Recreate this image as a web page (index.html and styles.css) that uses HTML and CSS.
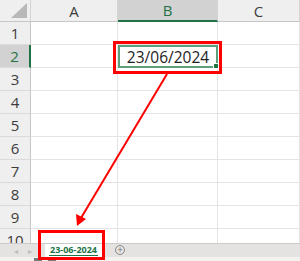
FILE: index.html
```html
<!DOCTYPE html>
<html lang="en">

<head>
    <link rel="stylesheet" href="styles.css">
    <title>Planilha</title>
</head>

<body>
    <div class="janela">
        <div class="grade">
            <div class="canto"><span class="triangulo"></span></div>
            <div class="cabecalho">A</div>
            <div class="cabecalho ativo">B</div>
            <div class="cabecalho">C</div>

            <div class="linha">1</div>
            <div class="celula"></div>
            <div class="celula"></div>
            <div class="celula"></div>

            <div class="linha ativa">2</div>
            <div class="celula"></div>
            <div class="celula selecionada">23/06/2024</div>
            <div class="celula"></div>

            <div class="linha">3</div>
            <div class="celula"></div>
            <div class="celula"></div>
            <div class="celula"></div>

            <div class="linha">4</div>
            <div class="celula"></div>
            <div class="celula"></div>
            <div class="celula"></div>

            <div class="linha">5</div>
            <div class="celula"></div>
            <div class="celula"></div>
            <div class="celula"></div>

            <div class="linha">6</div>
            <div class="celula"></div>
            <div class="celula"></div>
            <div class="celula"></div>

            <div class="linha">7</div>
            <div class="celula"></div>
            <div class="celula"></div>
            <div class="celula"></div>

            <div class="linha">8</div>
            <div class="celula"></div>
            <div class="celula"></div>
            <div class="celula"></div>

            <div class="linha">9</div>
            <div class="celula"></div>
            <div class="celula"></div>
            <div class="celula"></div>

            <div class="linha">10</div>
            <div class="celula"></div>
            <div class="celula"></div>
            <div class="celula"></div>
        </div>

        <div class="abas">
            <span class="nav">&#9666;</span>
            <span class="nav">&#9656;</span>
            <div class="aba"><span>23-06-2024</span></div>
            <span class="mais">+</span>
        </div>
        <div class="status">
            <span class="bloco"></span>
            <span class="bloco"></span>
        </div>

        <!-- marcacoes em vermelho -->
        <div class="destaque destaque-celula"></div>
        <div class="destaque destaque-aba"></div>
        <svg class="seta" width="300" height="261" viewBox="0 0 300 261">
            <line x1="167" y1="74" x2="81" y2="218" stroke="#ff0000" stroke-width="2" />
            <polygon points="77,226 76,214 86,219" fill="#ff0000" />
        </svg>
    </div>
</body>

</html>
```

FILE: styles.css
```css
* {
    box-sizing: border-box;
    margin: 0;
    padding: 0;
}

body {
    width: 300px;
    height: 261px;
    overflow: hidden;
    background: #ffffff;
    font-family: "Open Sans", "Liberation Sans", sans-serif;
}

.janela {
    position: relative;
    width: 300px;
    height: 261px;
    display: flex;
    flex-direction: column;
}

.grade {
    display: grid;
    grid-template-columns: 31px 87px 100px 1fr;
    grid-template-rows: 22px repeat(10, 23px);
    height: 243px;
    overflow: hidden;
}

.canto {
    background: #efefef;
    border-right: 1px solid #d4d4d4;
    border-bottom: 1px solid #c6c6c6;
    display: flex;
    justify-content: flex-end;
    align-items: flex-end;
    padding: 0 3px 3px 0;
}

.triangulo {
    width: 0;
    height: 0;
    border-left: 16px solid transparent;
    border-bottom: 15px solid #b8b8b8;
}

.cabecalho {
    background: #efefef;
    border-right: 1px solid #d4d4d4;
    border-bottom: 1px solid #c6c6c6;
    display: flex;
    justify-content: center;
    align-items: center;
    font-size: 15px;
    color: #3c3c3c;
}

.cabecalho.ativo {
    background: #d2d2d2;
    color: #217346;
    border-bottom: 2px solid #217346;
}

.linha {
    background: #efefef;
    border-right: 1px solid #c6c6c6;
    border-bottom: 1px solid #dadada;
    display: flex;
    justify-content: center;
    align-items: center;
    font-size: 15px;
    color: #3c3c3c;
}

.linha.ativa {
    background: #d2d2d2;
    color: #217346;
    border-right: 2px solid #217346;
}

.celula {
    border-right: 1px solid #e4e4e4;
    border-bottom: 1px solid #e4e4e4;
}

.celula.selecionada {
    position: relative;
    border: 2px solid #5d9f7b;
    display: flex;
    justify-content: center;
    align-items: center;
    font-size: 15.5px;
    color: #1e1e1e;
}

.celula.selecionada::after {
    content: "";
    position: absolute;
    right: -3px;
    bottom: -3px;
    width: 4px;
    height: 4px;
    background: #217346;
    border: 1px solid #ffffff;
}

.abas {
    height: 14px;
    background: #e4e3e1;
    border-top: 1px solid #cbcbcb;
    display: flex;
    align-items: stretch;
    padding-left: 9px;
}

.nav {
    width: 14px;
    font-size: 8px;
    color: #bdbdbd;
    display: flex;
    align-items: center;
    justify-content: center;
}

.aba {
    margin-left: 8px;
    width: 58px;
    background: #ffffff;
    display: flex;
    justify-content: center;
    align-items: flex-start;
    border-right: 1px solid #c8c8c8;
}

.aba span {
    font-size: 9px;
    font-weight: bold;
    color: #217346;
    line-height: 11px;
    border-bottom: 1px solid #217346;
    padding: 0 1px;
}

.mais {
    margin-left: 12px;
    width: 10px;
    height: 10px;
    margin-top: 1px;
    border: 1px solid #8a8a8a;
    border-radius: 50%;
    color: #6a6a6a;
    font-size: 9px;
    line-height: 8px;
    text-align: center;
}

.status {
    flex: 1;
    background: #f3f2f1;
    display: flex;
    gap: 6px;
    padding-left: 34px;
    padding-top: 1px;
}

.bloco {
    width: 8px;
    height: 3px;
    background: #7a7a7a;
}

.destaque {
    position: absolute;
    border: 3px solid #ff0000;
}

.destaque-celula {
    left: 113px;
    top: 41px;
    width: 109px;
    height: 33px;
}

.destaque-aba {
    left: 38px;
    top: 230px;
    width: 67px;
    height: 30px;
}

.seta {
    position: absolute;
    left: 0;
    top: 0;
    pointer-events: none;
}
```
